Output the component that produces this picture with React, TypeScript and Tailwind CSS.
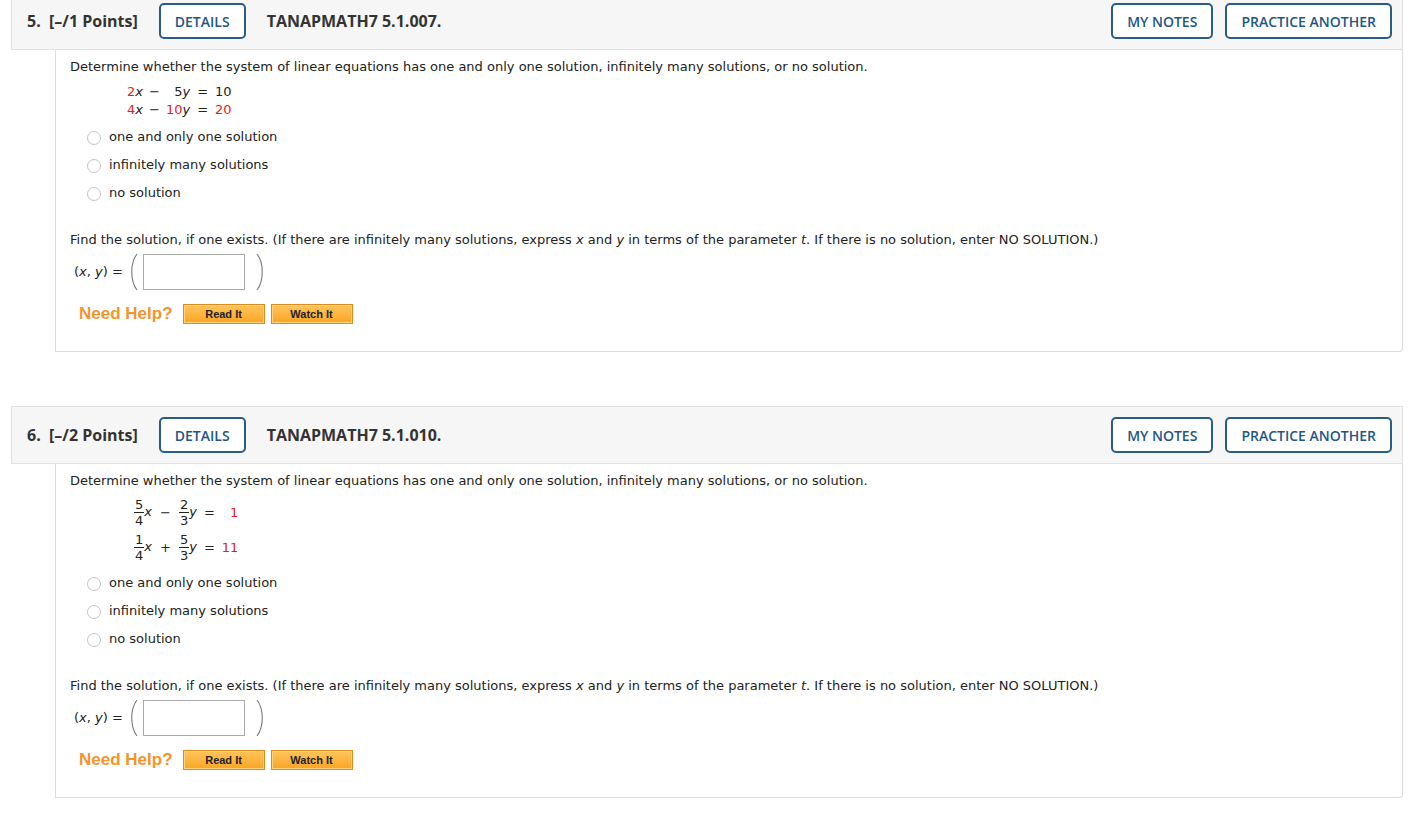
import type { ReactNode } from "react";

const red = "text-[#e2231a]";

function Paren({ flip }: { flip?: boolean }) {
  return (
    <svg width="10" height="38" viewBox="0 0 10 38" className={flip ? "-scale-x-100" : ""}>
      <path d="M8 1 C1 10 1 28 8 37" fill="none" stroke="#777" strokeWidth="1.1" />
    </svg>
  );
}

function Frac({ n, d }: { n: string; d: string }) {
  return (
    <span className="inline-flex flex-col items-center align-middle text-[13px] leading-[15px]">
      <span className="px-[1px]">{n}</span>
      <span className="h-px w-full bg-[#222]" />
      <span className="px-[1px]">{d}</span>
    </span>
  );
}

function Radio({ label }: { label: string }) {
  return (
    <label className="flex h-7 items-center">
      <span className="ml-[18px] mr-[8px] mt-[2px] h-[14px] w-[14px] rounded-full border border-[#c4c4c4] bg-white" />
      <span>{label}</span>
    </label>
  );
}

function HeaderButton({ children }: { children: ReactNode }) {
  return (
    <button className="h-9 rounded-[5px] border-2 border-[#285c89] bg-white px-[14px] text-[14px] font-semibold text-[#1f5687]">
      {children}
    </button>
  );
}

function OrangeButton({ children }: { children: ReactNode }) {
  return (
    <button className="h-5 w-[82px] border border-[#e08a1e] bg-gradient-to-b from-[#ffc45a] to-[#f9a51e] p-0 font-['Liberation_Sans',Arial,sans-serif] text-[11px] font-bold text-[#222] shadow-[inset_0_0_0_1px_#ffd27e]">
      {children}
    </button>
  );
}

interface QuestionProps {
  num: number;
  points: number;
  code: string;
  system: ReactNode;
  first?: boolean;
}

function Question({ num, points, code, system, first }: QuestionProps) {
  return (
    <section className={first ? "-mt-[8px]" : "mt-[54px]"}>
      <div className="flex h-[58px] items-center border border-[#e2e2e2] bg-[#f6f6f6] pl-[15px] pr-[10px] font-['Open_Sans',sans-serif]">
        <span className="text-[16px] font-bold text-[#333]">
          {num}.&nbsp; [–/{points} Points]
        </span>
        <span className="ml-[21px]">
          <HeaderButton>DETAILS</HeaderButton>
        </span>
        <span className="ml-[21px] text-[16px] font-bold text-[#333]">{code}</span>
        <div className="ml-auto flex gap-[12px]">
          <HeaderButton>MY NOTES</HeaderButton>
          <HeaderButton>PRACTICE ANOTHER</HeaderButton>
        </div>
      </div>
      <div className="ml-[44px] rounded-br-[4px] border-x border-b border-[#dcdcdc] pb-[27px] pl-[14px] pt-[8px] font-['DejaVu_Sans',Verdana,sans-serif] text-[13px] leading-[18px] text-[#222]">
        <p>
          Determine whether the system of linear equations has one and only one solution, infinitely many solutions, or
          no solution.
        </p>
        <div className="ml-[57px] mt-[7px]">{system}</div>
        <div className="-ml-[1px] mt-[4px]">
          <Radio label="one and only one solution" />
          <Radio label="infinitely many solutions" />
          <Radio label="no solution" />
        </div>
        <p className="mt-[24px]">
          Find the solution, if one exists. (If there are infinitely many solutions, express <i>x</i> and <i>y</i> in
          terms of the parameter <i>t</i>. If there is no solution, enter NO SOLUTION.)
        </p>
        <div className="mt-[4px] flex items-center">
          <span className="ml-[4px] mr-[6px]">
            (<i>x</i>, <i>y</i>) =
          </span>
          <Paren />
          <span className="ml-[4px] mr-[10px] h-[36px] w-[102px] border border-[#aaa] bg-white" />
          <Paren flip />
        </div>
        <div className="mt-[13px] flex items-center">
          <span className="ml-[9px] mr-[10px] font-['Liberation_Sans',Arial,sans-serif] text-[17px] font-bold text-[#f4942a]">
            Need Help?
          </span>
          <div className="flex gap-[6px]">
            <OrangeButton>Read It</OrangeButton>
            <OrangeButton>Watch It</OrangeButton>
          </div>
        </div>
      </div>
    </section>
  );
}

const system5 = (
  <table className="border-collapse leading-[18px]">
    <tbody>
      <tr>
        <td className="p-0 text-right">
          <span className={red}>2</span>
          <i>x</i>
        </td>
        <td className="px-[6px] py-0 text-center">−</td>
        <td className="p-0 text-right">
          5<i>y</i>
        </td>
        <td className="px-[7px] py-0">=</td>
        <td className="p-0 text-right">10</td>
      </tr>
      <tr>
        <td className="p-0 text-right">
          <span className={red}>4</span>
          <i>x</i>
        </td>
        <td className="px-[6px] py-0 text-center">−</td>
        <td className="p-0 text-right">
          <span className={red}>10</span>
          <i>y</i>
        </td>
        <td className="px-[7px] py-0">=</td>
        <td className={`p-0 text-right ${red}`}>20</td>
      </tr>
    </tbody>
  </table>
);

const system6 = (
  <table className="ml-[7px] -mt-[2px] border-collapse">
    <tbody>
      <tr className="h-[35px]">
        <td className="p-0">
          <Frac n="5" d="4" />
          <i>x</i>
        </td>
        <td className="px-[8px] py-0 text-center">−</td>
        <td className="p-0">
          <Frac n="2" d="3" />
          <i>y</i>
        </td>
        <td className="px-[7px] py-0">=</td>
        <td className={`p-0 text-right ${red}`}>1</td>
      </tr>
      <tr className="h-[35px]">
        <td className="p-0">
          <Frac n="1" d="4" />
          <i>x</i>
        </td>
        <td className="px-[8px] py-0 text-center">+</td>
        <td className="p-0">
          <Frac n="5" d="3" />
          <i>y</i>
        </td>
        <td className="px-[7px] py-0">=</td>
        <td className={`p-0 text-right ${red}`}>11</td>
      </tr>
    </tbody>
  </table>
);

export default function App() {
  return (
    <div className="min-h-screen bg-white pl-[11px] pr-[17px]">
      <Question first num={5} points={1} code="TANAPMATH7 5.1.007." system={system5} />
      <Question num={6} points={2} code="TANAPMATH7 5.1.010." system={system6} />
    </div>
  );
}
